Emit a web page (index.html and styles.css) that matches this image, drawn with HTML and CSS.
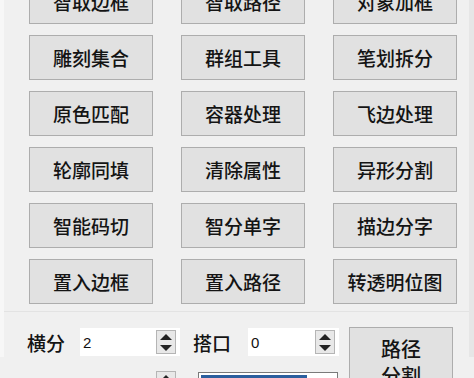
FILE: index.html
```html
<!DOCTYPE html>
<html lang="zh">
<head>
<meta charset="utf-8">
<link rel="stylesheet" href="styles.css">
</head>
<body>
<div class="panel">
  <div class="grid">
    <button class="btn">智取边框</button>
    <button class="btn">智取路径</button>
    <button class="btn">对象加框</button>
    <button class="btn">雕刻集合</button>
    <button class="btn">群组工具</button>
    <button class="btn">笔划拆分</button>
    <button class="btn">原色匹配</button>
    <button class="btn">容器处理</button>
    <button class="btn">飞边处理</button>
    <button class="btn">轮廓同填</button>
    <button class="btn">清除属性</button>
    <button class="btn">异形分割</button>
    <button class="btn">智能码切</button>
    <button class="btn">智分单字</button>
    <button class="btn">描边分字</button>
    <button class="btn">置入边框</button>
    <button class="btn">置入路径</button>
    <button class="btn">转透明位图</button>
  </div>
  <div class="group">
    <div class="fields">
      <div class="row">
        <span class="label">横分</span>
        <div class="spin w1">
          <span class="val">2</span>
          <span class="arrows"><span class="up"></span><span class="down"></span></span>
        </div>
        <span class="label l2">搭口</span>
        <div class="spin w2">
          <span class="val">0</span>
          <span class="arrows"><span class="up"></span><span class="down"></span></span>
        </div>
      </div>
      <div class="row row2">
        <div class="spin w1 blank">
          <span class="val"></span>
          <span class="arrows"><span class="up"></span><span class="down"></span></span>
        </div>
        <div class="bar"><div class="fill"></div></div>
      </div>
    </div>
    <button class="btn big"><span class="ln">路径</span><span class="ln">分割</span></button>
  </div>
</div>
</body>
</html>
```
FILE: styles.css
```css
* { box-sizing: border-box; }
html, body { margin: 0; padding: 0; }
body {
  width: 474px;
  height: 378px;
  overflow: hidden;
  background: #f0f0f0;
  font-family: "Noto Sans CJK SC", "Microsoft YaHei", sans-serif;
}
.panel {
  height: 100%;
  border-left: 4px solid #f7f7f7;
  border-right: 5px solid #e6e6e6;
}
.grid {
  display: grid;
  grid-template-columns: repeat(3, 124px);
  grid-auto-rows: 45px;
  column-gap: 28px;
  row-gap: 11px;
  padding-left: 25px;
  margin-top: -21px;
}
.btn {
  background: #e1e1e1;
  border: 1px solid #adadad;
  border-radius: 0;
  font-family: inherit;
  font-size: 19px;
  font-weight: 500;
  color: #141414;
  padding: 0;
  margin: 0;
  line-height: 22px;
}
.group {
  margin-top: 7px;
  border-top: 1px solid #e3e3e3;
  display: flex;
  padding-top: 16px;
  padding-left: 23px;
}
.fields {
  display: flex;
  flex-direction: column;
  width: 322px;
}
.row {
  display: flex;
  align-items: center;
  height: 28px;
}
.label {
  font-size: 19px;
  font-weight: 500;
  color: #141414;
  width: 53px;
}
.l2 { width: 55px; margin-left: 13px; }
.spin {
  background: #fff;
  height: 28px;
  display: flex;
  align-items: center;
  justify-content: space-between;
  padding: 0 4px 0 3px;
}
.w1 { width: 100px; }
.w2 { width: 91px; }
.val {
  font-family: "Liberation Sans", Arial, sans-serif;
  font-size: 15px;
  color: #111;
}
.arrows {
  width: 20px;
  height: 24px;
  border: 1px solid #b5b5b5;
  background: #e8e8e8;
  display: flex;
  flex-direction: column;
  align-items: center;
  justify-content: space-around;
}
.up, .down {
  width: 0; height: 0;
  border-left: 6px solid transparent;
  border-right: 6px solid transparent;
}
.up { border-bottom: 6px solid #222; }
.down { border-top: 6px solid #222; }
.row2 { margin-top: 13px; align-items: flex-start; }
.blank { margin-left: 53px; background: transparent; justify-content: flex-end; }
.bar {
  margin-left: 18px;
  width: 140px;
  height: 20px;
  margin-top: 3px;
  border: 1px solid #7a7a7a;
  background: #fff;
  padding: 2px;
}
.fill { width: 106px; height: 100%; background: #2b5f9e; }
.big {
  width: 104px;
  height: 60px;
  margin-top: -1px;
  font-size: 20px;
  line-height: 24px;
  padding-top: 9px;
  display: flex;
  flex-direction: column;
  align-items: center;
  justify-content: flex-start;
  gap: 3px;
}
.ln { display: block; }
```
